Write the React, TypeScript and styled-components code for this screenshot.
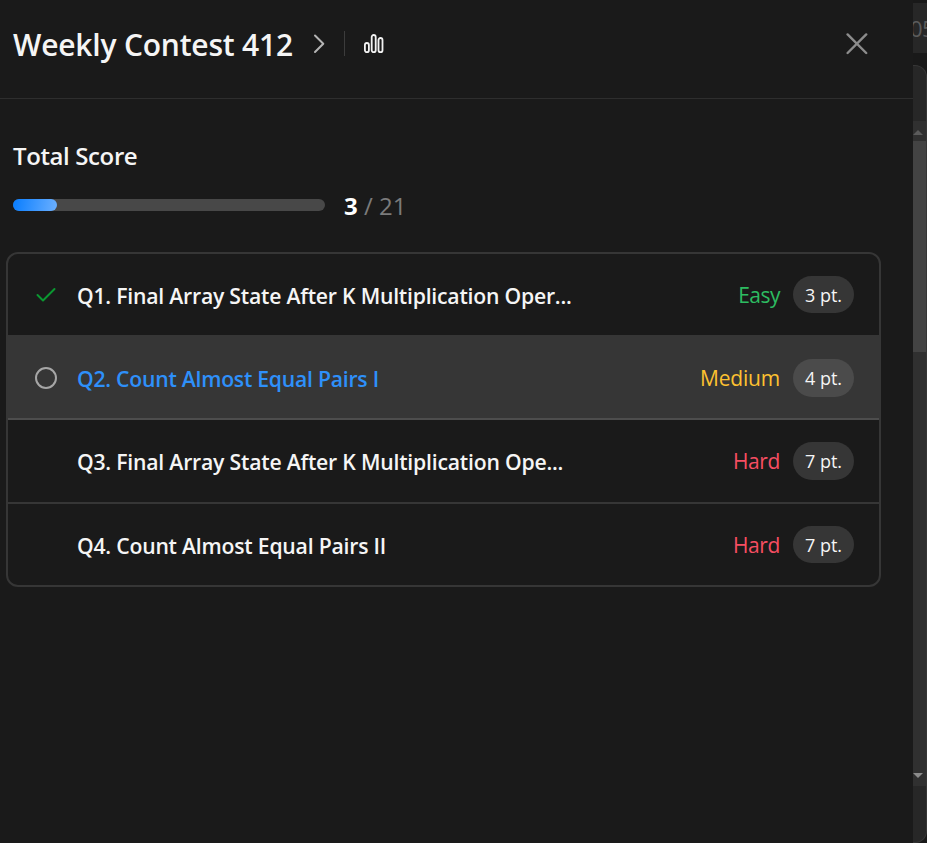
import styled, { createGlobalStyle } from "styled-components";

const Global = createGlobalStyle`
  *, *::before, *::after { box-sizing: border-box; }
  body { margin: 0; background: #1a1a1a; overflow: hidden; font-family: "Open Sans", "Noto Sans", sans-serif; }
`;

const Page = styled.div`
  display: flex;
  width: 927px;
  height: 843px;
  overflow: hidden;
  background: #1a1a1a;
`;

const Panel = styled.main`
  flex: none;
  width: 913px;
  height: 843px;
  background: #1a1a1a;
  color: #f5f5f5;
`;

const Header = styled.header`
  display: flex;
  align-items: center;
  height: 99px;
  padding: 0 45px 11px 13px;
  border-bottom: 1px solid #2e2e2e;
`;

const Title = styled.h1`
  margin: 0;
  padding-top: 2px;
  width: 280px;
  font-size: 30px;
  font-weight: 600;
  line-height: 40px;
  letter-spacing: -0.2px;
  white-space: nowrap;
`;

const Chevron = styled.svg`
  flex: none;
  margin-left: 20px;
`;

const Divider = styled.span`
  width: 1px;
  height: 25px;
  margin-left: 19px;
  background: #3c3c3c;
`;

const ChartIcon = styled.svg`
  flex: none;
  margin-left: 18px;
`;

const CloseButton = styled.button`
  display: flex;
  margin: 0 0 0 auto;
  padding: 0;
  border: 0;
  background: none;
`;

const Score = styled.section`
  height: 153px;
  padding: 41px 13px 0;
`;

const ScoreTitle = styled.h2`
  margin: 0;
  font-size: 24px;
  font-weight: 600;
  line-height: 32px;
  letter-spacing: -0.38px;
`;

const ScoreRow = styled.div`
  display: flex;
  align-items: center;
  height: 32px;
  margin-top: 17px;
`;

const Track = styled.div`
  width: 312px;
  height: 12px;
  border-radius: 6px;
  background: #484848;
`;

const Fill = styled.div`
  width: 44px;
  height: 12px;
  border-radius: 6px;
  background: linear-gradient(100deg, #087dff, #6cb0ff);
`;

const ScoreText = styled.div`
  margin-left: 19px;
  padding-top: 2px;
  font-size: 24px;
  line-height: 32px;
  color: #7b7b7b;
  white-space: pre;
  b { font-weight: 700; color: #fff; }
`;

const List = styled.ul`
  display: grid;
  grid-template-rows: 83px 83px 84px 81px;
  width: 875px;
  height: 335px;
  margin: 0 0 0 6px;
  padding: 0;
  list-style: none;
  border: 2px solid #363636;
  border-radius: 12px;
  overflow: hidden;
`;

const Row = styled.li<{ $active?: boolean }>`
  display: flex;
  align-items: center;
  padding: 0 25px 0 27px;
  border-bottom: 2px solid ${(p) => (p.$active ? "#4d4d4d" : "#363636")};
  background: ${(p) => (p.$active ? "#363636" : "transparent")};
  &:last-child { border-bottom: 0; }
`;

const Status = styled.span`
  display: flex;
  flex: none;
  width: 42px;
  height: 24px;
`;

const Name = styled.span<{ $active?: boolean; $track: number }>`
  flex: 1;
  padding-top: 2px;
  font-size: 21.2px;
  font-weight: 600;
  line-height: 30px;
  letter-spacing: ${(p) => p.$track}px;
  white-space: nowrap;
  color: ${(p) => (p.$active ? "#2e90fa" : "#f5f5f5")};
`;

const Level = styled.span<{ $color: string; $track: number }>`
  font-size: 21px;
  line-height: 30px;
  letter-spacing: ${(p) => p.$track}px;
  color: ${(p) => p.$color};
`;

const Points = styled.span<{ $active?: boolean; $height: number }>`
  display: flex;
  align-items: center;
  justify-content: center;
  width: 61px;
  height: ${(p) => p.$height}px;
  margin-left: 13px;
  border-radius: 19px;
  font-size: 18px;
  background: ${(p) => (p.$active ? "#4b4b4b" : "#363636")};
`;

const Behind = styled.aside`
  display: flex;
  flex-direction: column;
  width: 14px;
  height: 843px;
  overflow: hidden;
  background: #191919;
`;

const Timer = styled.div`
  height: 50px;
  margin-top: 3px;
  overflow: hidden;
  background: #272727;
  color: #5b5b5b;
  font-size: 22px;
  line-height: 50px;
  letter-spacing: -0.5px;
  text-indent: -3px;
`;

const Editor = styled.div`
  display: flex;
  flex-direction: column;
  height: 778px;
  margin-top: 12px;
  border: 1px solid #363636;
  border-left: 0;
  border-radius: 0 12px 12px 0;
  background: #272727;
  overflow: hidden;
`;

const Scrollbar = styled.div`
  height: 665px;
  margin-top: 55px;
  display: flex;
  flex-direction: column;
  background: #303030;
`;

const Thumb = styled.div`
  height: 211px;
  background: #434343;
`;

const Arrow = styled.svg<{ $end?: boolean }>`
  display: block;
  flex: none;
  margin-top: ${(p) => (p.$end ? "auto" : "0")};
`;

const problems = [
  { name: "Q1. Final Array State After K Multiplication Oper...", level: "Easy", color: "#2dbc61", pt: 3, status: "done", track: -0.22, lt: -0.5, pill: 37 },
  { name: "Q2. Count Almost Equal Pairs I", level: "Medium", color: "#fdc130", pt: 4, status: "open", track: -0.25, lt: -0.2, pill: 38 },
  { name: "Q3. Final Array State After K Multiplication Ope...", level: "Hard", color: "#f64e62", pt: 7, status: "", track: -0.21, lt: -0.4, pill: 38 },
  { name: "Q4. Count Almost Equal Pairs II", level: "Hard", color: "#f64e62", pt: 7, status: "", track: -0.22, lt: -0.4, pill: 37 },
];

export default function App() {
  return (
    <Page>
      <Global />
      <Panel>
        <Header>
          <Title>Weekly Contest 412</Title>
          <Chevron width="12" height="22" viewBox="0 0 12 22" fill="none" stroke="#b4b4b4" strokeWidth="2" strokeLinecap="round" strokeLinejoin="round">
            <path d="M2 2.5 L10.3 10.7 L2 19" />
          </Chevron>
          <Divider />
          <ChartIcon width="22" height="22" viewBox="0 0 22 22" fill="none" stroke="#f2f2f2" strokeWidth="1.8">
            <rect x="1.9" y="10" width="4" height="9.2" rx="2" />
            <rect x="8.7" y="2" width="4" height="17.2" rx="2" />
            <rect x="15.5" y="5" width="4" height="14.2" rx="2" />
          </ChartIcon>
          <CloseButton aria-label="Close">
            <svg width="22" height="22" viewBox="0 0 22 22" fill="none" stroke="#8c8c8c" strokeWidth="2.4" strokeLinecap="round">
              <path d="M1.6 1.4 L20.2 20 M20.2 1.4 L1.6 20" />
            </svg>
          </CloseButton>
        </Header>
        <Score>
          <ScoreTitle>Total Score</ScoreTitle>
          <ScoreRow>
            <Track><Fill /></Track>
            <ScoreText><b>3</b> / 21</ScoreText>
          </ScoreRow>
        </Score>
        <List>
          {problems.map((p) => {
            const active = p.status === "open";
            return (
              <Row key={p.name} $active={active}>
                <Status>
                  {p.status === "done" && (
                    <svg width="24" height="24" viewBox="0 0 24 24" fill="none" stroke="#0a9831" strokeWidth="2" strokeLinecap="round" strokeLinejoin="round">
                      <path d="M2.5 12 L8 17.5 L19.5 6" />
                    </svg>
                  )}
                  {active && (
                    <svg width="24" height="24" viewBox="0 0 24 24" fill="none" stroke="#a6a6a6" strokeWidth="2">
                      <circle cx="11" cy="12" r="10" />
                    </svg>
                  )}
                </Status>
                <Name $active={active} $track={p.track}>{p.name}</Name>
                <Level $color={p.color} $track={p.lt}>{p.level}</Level>
                <Points $active={active} $height={p.pill}>{p.pt} pt.</Points>
              </Row>
            );
          })}
        </List>
      </Panel>
      <Behind>
        <Timer>05</Timer>
        <Editor>
          <Scrollbar>
            <Arrow width="14" height="20" viewBox="0 0 14 20"><path d="M0 14 L5 9 L10 14 Z" fill="#5b5b5b" /></Arrow>
            <Thumb />
            <Arrow $end width="14" height="20" viewBox="0 0 14 20"><path d="M0 7 L10 7 L5 12 Z" fill="#8c8c8c" /></Arrow>
          </Scrollbar>
        </Editor>
      </Behind>
    </Page>
  );
}
